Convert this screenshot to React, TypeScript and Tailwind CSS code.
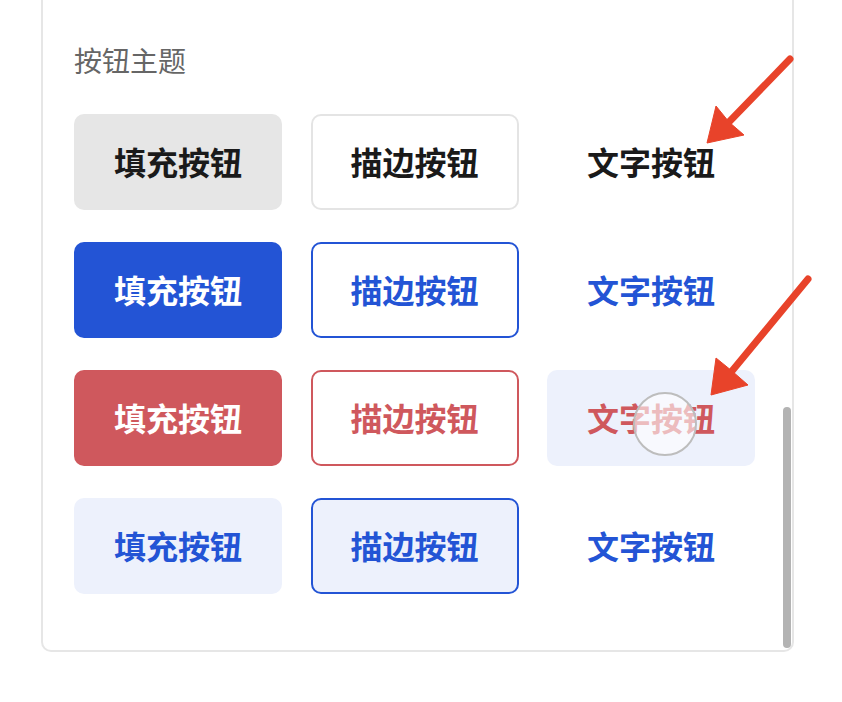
import React from 'react';

type Btn = { label: string; className: string };

const rows: Btn[][] = [
  [
    { label: '填充按钮', className: 'bg-[#e6e6e6] text-[#1a1a1a]' },
    { label: '描边按钮', className: 'border-2 border-[#e4e4e4] bg-white text-[#1a1a1a]' },
    { label: '文字按钮', className: 'text-[#1a1a1a]' },
  ],
  [
    { label: '填充按钮', className: 'bg-[#2354d5] text-white' },
    { label: '描边按钮', className: 'border-2 border-[#2354d5] bg-white text-[#2354d5]' },
    { label: '文字按钮', className: 'text-[#2354d5]' },
  ],
  [
    { label: '填充按钮', className: 'bg-[#cf585d] text-white' },
    { label: '描边按钮', className: 'border-2 border-[#cf585d] bg-white text-[#cf585d]' },
    { label: '文字按钮', className: 'bg-[#edf1fc] text-[#cf585d]' },
  ],
  [
    { label: '填充按钮', className: 'bg-[#edf1fc] text-[#2354d5]' },
    { label: '描边按钮', className: 'border-2 border-[#2354d5] bg-[#edf1fc] text-[#2354d5]' },
    { label: '文字按钮', className: 'text-[#2354d5]' },
  ],
];

function Arrow({ tail, tip, w1, w2, notch }: { tail: [number, number]; tip: [number, number]; w1: [number, number]; w2: [number, number]; notch: [number, number] }) {
  return (
    <g fill="#e8432a" stroke="#e8432a">
      <line x1={tail[0]} y1={tail[1]} x2={notch[0]} y2={notch[1]} strokeWidth="7" strokeLinecap="round" />
      <polygon points={`${tip[0]},${tip[1]} ${w1[0]},${w1[1]} ${notch[0]},${notch[1]} ${w2[0]},${w2[1]}`} strokeWidth="1" strokeLinejoin="round" />
    </g>
  );
}

export default function App() {
  return (
    <div className="relative w-[842px] h-[702px] bg-white font-['Noto_Sans_CJK_SC','Noto_Sans',sans-serif]">
      <div className="pl-[41px]">
        <div className="relative w-[753px] h-[652px] border-x-2 border-b-2 border-[#e6e6e6] rounded-b-[10px] pl-[31px] pt-[40px]">
          <div className="text-[28px] leading-[40px] text-[#666666]">按钮主题</div>
          <div className="mt-[34px] grid grid-cols-[208px_208px_208px] gap-x-[28.5px] gap-y-[32px]">
            {rows.flat().map((b, i) => (
              <div
                key={i}
                className={`h-[96px] rounded-[10px] flex items-center justify-center text-[32px] leading-[40px] font-bold pb-[2px] ${b.className}`}
              >
                {b.label}
              </div>
            ))}
          </div>
          <div className="absolute right-[1px] top-[407px] w-[8px] h-[241px] rounded-full bg-[#b3b3b3]" />
        </div>
      </div>

      <div className="absolute left-[633px] top-[392px] w-[64px] h-[64px] rounded-full border-2 border-[#bdbdbd] bg-white/60" />

      <svg className="absolute inset-0 pointer-events-none" width="842" height="702" viewBox="0 0 842 702">
        <Arrow tail={[790, 59]} tip={[707, 143]} w1={[716, 106]} w2={[744, 135]} notch={[729, 122]} />
        <Arrow tail={[808, 279]} tip={[711, 395]} w1={[716, 358]} w2={[748, 385]} notch={[732, 371]} />
      </svg>
    </div>
  );
}
